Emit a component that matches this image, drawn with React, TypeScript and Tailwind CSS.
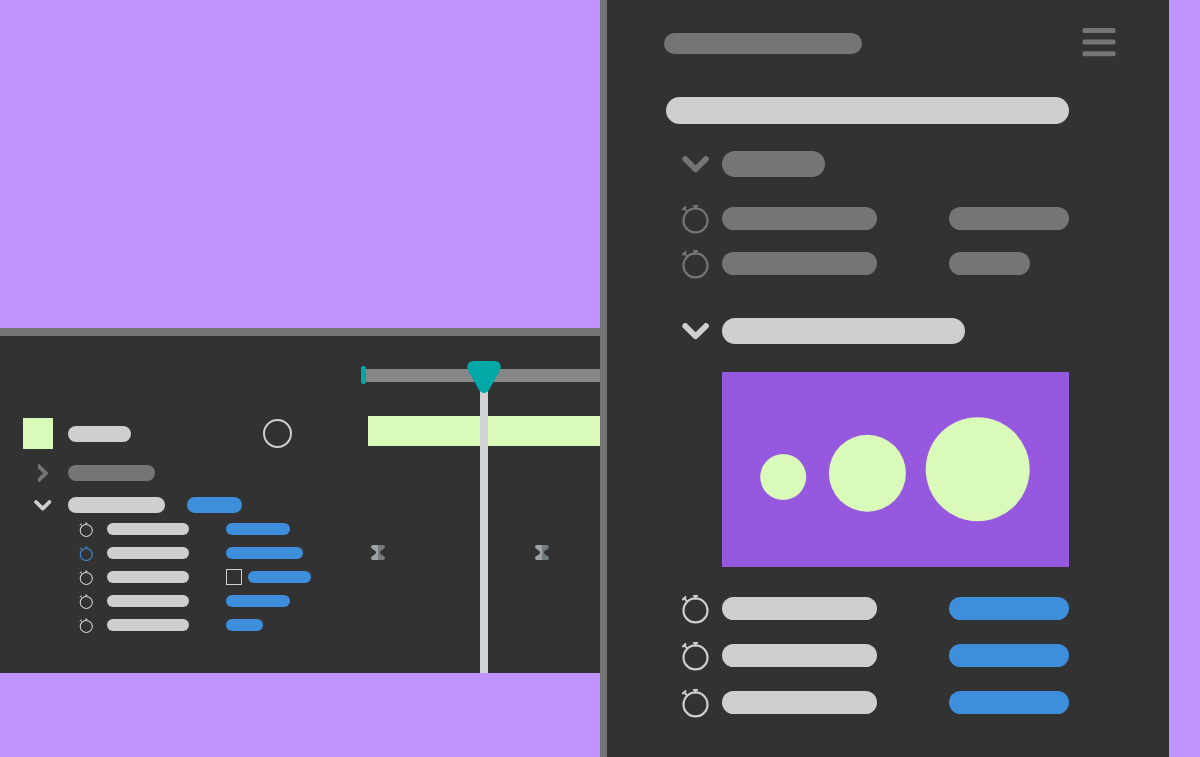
import { useState } from "react";
import clsx from "clsx";

const propertyRows = [
  { id: "position", value: "w-[64px]" },
  { id: "scale", value: "w-[77px]", keyed: true },
  { id: "size", value: "w-[63px]", checkbox: true },
  { id: "rotation", value: "w-[64px]" },
  { id: "opacity", value: "w-[37px]" },
];

const mutedControls = [
  { id: "anchor", value: "w-[120px]" },
  { id: "offset", value: "w-[81px]" },
];

const activeControls = ["width", "height", "spacing"];

function Pill({ className }: { className: string }) {
  return <div className={clsx("shrink-0 rounded-full", className)} />;
}

function StopwatchIcon({ className }: { className: string }) {
  return (
    <svg viewBox="0 0 30 33" className={className} fill="none" stroke="currentColor" aria-hidden="true">
      <circle cx="14.5" cy="18.4" r="12" strokeWidth="2.2" />
      <path d="M12 3.9h5M14.500 4v3.500" strokeWidth="1.9" />
      <path d="M1.300 7.900 5.100 4.600M3.300 6.200 6 9.300" strokeWidth="2" />
    </svg>
  );
}

function ChevronDownIcon({ className }: { className: string }) {
  return (
    <svg viewBox="0 0 28 17" className={className} aria-hidden="true">
      <path
        d="M3.2 3 13.600 13.300 24 3"
        fill="none"
        stroke="currentColor"
        strokeWidth="5.800"
        strokeLinecap="round"
        strokeLinejoin="round"
      />
    </svg>
  );
}

function Keyframe() {
  return (
    <svg viewBox="0 0 14 15" className="h-[15px] w-[14px]" aria-hidden="true">
      <path d="M7 0H2C0 0-.6 2.2.8 3.4L4 5.8c1.3 1 1.3 2.4 0 3.4L.8 11.6C-.6 12.8 0 15 2 15h5z" fill="#9aa3a8" />
      <path d="M7 0h5c2 0 2.6 2.2 1.2 3.4L10 5.8c-1.3 1-1.3 2.4 0 3.4l3.2 2.4c1.4 1.2.8 3.4-1.2 3.4H7z" fill="#737b7d" />
    </svg>
  );
}

function LayerList() {
  return (
    <div className="w-[361px] shrink-0 pt-[82px] pb-9 pl-[23px]">
      <div className="flex h-[31px] items-center gap-[5px]">
        <div className="w-10">
          <div className="h-[31px] w-[30px] bg-[#dafab9]" />
        </div>
        <Pill className="h-4 w-[63px] bg-[#cfcfcf]" />
        <button
          type="button"
          aria-label="Layer parent"
          className="ml-[127px] size-[29px] rounded-full border-2 border-[#cfcfcf]"
        />
      </div>

      <div className="mt-4 flex h-4 items-center gap-[5px]">
        <button type="button" aria-label="Expand group" className="flex w-10 justify-center text-[#757575]">
          <svg viewBox="0 0 11 18" className="h-[18px] w-[11px]" aria-hidden="true">
            <path
              d="M0 1.600 7.900 9.200 0 16.800"
              fill="none"
              stroke="currentColor"
              strokeWidth="3.800"
              strokeLinecap="round"
            />
          </svg>
        </button>
        <Pill className="h-4 w-[87px] bg-[#757575]" />
      </div>

      <div className="mt-4 flex h-4 items-center gap-[5px]">
        <button type="button" aria-label="Collapse group" className="flex w-10 justify-center text-[#cfcfcf]">
          <ChevronDownIcon className="h-[11px] w-[18px]" />
        </button>
        <Pill className="h-4 w-[97px] bg-[#cfcfcf]" />
        <Pill className="ml-[17px] h-4 w-[55px] bg-[#3d8edb]" />
      </div>

      <ul className="mt-1 pl-14">
        {propertyRows.map((row) => (
          <li key={row.id} className="flex h-6 items-center">
            <button
              type="button"
              aria-label={`Animate ${row.id}`}
              className={row.keyed ? "text-[#3d8edb]" : "text-[#cfcfcf]"}
            >
              <StopwatchIcon className="h-[17px] w-[15px]" />
            </button>
            <Pill className="ml-[13px] h-3 w-[82px] bg-[#cfcfcf]" />
            <div className="ml-[37px] flex items-center gap-[6px]">
              {row.checkbox && (
                <input
                  type="checkbox"
                  aria-label={`Link ${row.id}`}
                  className="size-4 appearance-none border border-[#cfcfcf] checked:bg-[#cfcfcf]"
                />
              )}
              <Pill className={clsx("h-3 bg-[#3d8edb]", row.value)} />
            </div>
          </li>
        ))}
      </ul>
    </div>
  );
}

function Timeline() {
  const [time, setTime] = useState(106);

  return (
    <div className="relative min-w-0 flex-1 overflow-hidden pt-6">
      <div className="flex h-[30px] items-center">
        <div className="h-[18px] w-[5px] rounded-xs bg-[#00a9a6]" />
        <div className="h-[13px] flex-1 bg-[#878787]" />
      </div>
      <div className="mt-[26px] ml-[7px] h-[30px] bg-[#dafab9]" />
      <div className="mt-[94px] flex h-6 items-center gap-[150px] pl-[10px]">
        <Keyframe />
        <Keyframe />
      </div>

      {/* playhead runs over the ruler and every track */}
      <div className="absolute top-[25px] bottom-0 flex w-[34px] flex-col items-center" style={{ left: time }}>
        <svg viewBox="0 0 34 32" className="relative z-10 h-8 w-[34px] shrink-0" aria-hidden="true">
          <path
            d="M6.5 0h21c5.2 0 7.8 5.200 5.200 9.800L22.200 28.600C19.900 33.100 14.100 33.100 11.800 28.600L1.300 9.800C-1.300 5.200 1.300 0 6.500 0z"
            fill="#00a9a6"
          />
        </svg>
        <div className="-mt-2 w-2 flex-1 bg-[#d2d3d5]" />
      </div>
      <input
        type="range"
        aria-label="Current time"
        min={0}
        max={205}
        value={time}
        onChange={(e) => setTime(Number(e.target.value))}
        className="absolute top-6 left-0 z-20 h-[30px] w-full cursor-pointer opacity-0"
      />
    </div>
  );
}

function SectionHeader({ label, tone, width }: { label: string; tone: "muted" | "active"; width: string }) {
  return (
    <div className="flex items-center gap-[11px]">
      <button
        type="button"
        aria-label={label}
        className={clsx("flex w-[30px] justify-center", tone === "muted" ? "text-[#757575]" : "text-[#cfcfcf]")}
      >
        <ChevronDownIcon className="h-[17px] w-7" />
      </button>
      <Pill className={clsx("h-[26px]", tone === "muted" ? "bg-[#757575]" : "bg-[#cfcfcf]", width)} />
    </div>
  );
}

function ControlRow({ id, tone, value }: { id: string; tone: "muted" | "active"; value: string }) {
  return (
    <li className="flex h-[33px] items-center justify-between">
      <div className="flex items-center gap-[11px]">
        <button
          type="button"
          aria-label={`Animate ${id}`}
          className={tone === "muted" ? "text-[#757575]" : "text-[#cfcfcf]"}
        >
          <StopwatchIcon className="h-[33px] w-[30px]" />
        </button>
        <Pill className={clsx("h-[23px] w-[155px]", tone === "muted" ? "bg-[#757575]" : "bg-[#cfcfcf]")} />
      </div>
      <div className="w-[120px]">
        <Pill className={clsx("h-[23px]", tone === "muted" ? "bg-[#757575]" : "bg-[#3d8edb]", value)} />
      </div>
    </li>
  );
}

function ControlsPanel() {
  return (
    <aside className="mr-[31px] min-w-0 flex-1 border-l-[7px] border-[#757575] bg-[#323232] pt-7 pb-9">
      <header className="flex h-[31px] items-center justify-between pr-[53px] pl-[57px]">
        <Pill className="h-[21px] w-[198px] bg-[#757575]" />
        <button type="button" aria-label="Panel menu" className="text-[#757575]">
          <svg viewBox="0 0 34 31" className="h-[31px] w-[34px]" fill="currentColor" aria-hidden="true">
            <rect x=".4" y="0" width="33.2" height="5" rx="2" />
            <rect x=".4" y="11.500" width="33.2" height="5" rx="2" />
            <rect x=".4" y="23.200" width="33.2" height="5" rx="2" />
          </svg>
        </button>
      </header>

      <div className="mt-[38px] pr-[100px] pl-[59px]">
        <Pill className="h-[27px] w-full bg-[#cfcfcf]" />
      </div>

      <div className="pr-[100px] pl-[74px]">
        <section className="mt-[27px]">
          <SectionHeader label="Collapse transform" tone="muted" width="w-[103px]" />
          <ul className="mt-[25px] flex flex-col gap-3">
            {mutedControls.map((row) => (
              <ControlRow key={row.id} id={row.id} tone="muted" value={row.value} />
            ))}
          </ul>
        </section>

        <section className="mt-[38px]">
          <SectionHeader label="Collapse effect" tone="active" width="w-[243px]" />
          <div className="mt-7 ml-[41px] bg-[#9558de]">
            <svg viewBox="0 0 346 195" className="h-[195px] w-full" fill="#dafab9" aria-hidden="true">
              <circle cx="60.700" cy="105" r="23" />
              <circle cx="144.900" cy="101.300" r="38.500" />
              <circle cx="255.200" cy="97.300" r="52" />
            </svg>
          </div>
          <ul className="mt-[25px] flex flex-col gap-[14px]">
            {activeControls.map((id) => (
              <ControlRow key={id} id={id} tone="active" value="w-[120px]" />
            ))}
          </ul>
        </section>
      </div>
    </aside>
  );
}

export default function App() {
  return (
    <div className="flex min-h-screen bg-[#c093ff]">
      <main className="flex w-1/2 shrink-0 flex-col justify-end pb-[84px]">
        <section className="flex border-t-8 border-[#757575] bg-[#323232]">
          <LayerList />
          <Timeline />
        </section>
      </main>
      <ControlsPanel />
    </div>
  );
}
